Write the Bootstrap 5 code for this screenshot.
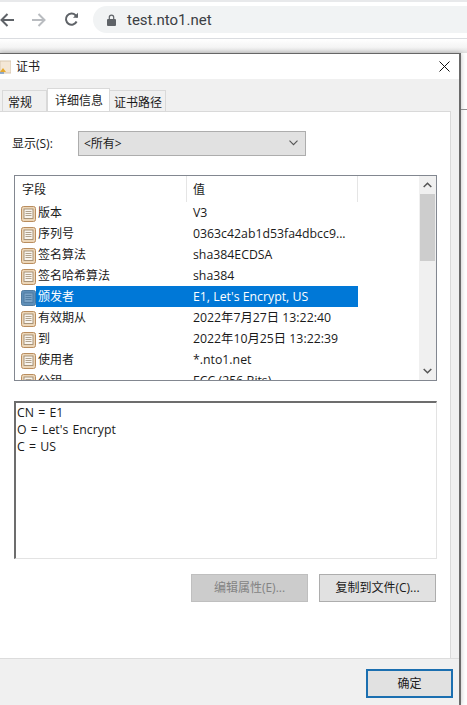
<!DOCTYPE html>
<html lang="zh">
<head>
<meta charset="utf-8">
<title>证书</title>
<link rel="stylesheet" href="https://cdn.jsdelivr.net/npm/bootstrap@5.3.0/dist/css/bootstrap.min.css">
<style>
html,body{height:705px;overflow:hidden;background:#fff}
body{font:12.3px/17px "Open Sans","Noto Sans CJK SC",sans-serif;color:#1a1a1a;width:467px}
.top-strip{height:2px;background:#e8e9eb}
.chrome{height:37px;padding-bottom:5px;border-bottom:1px solid #dadce0}
.chrome-btns{width:93px;height:27px;gap:18px}
.addr{height:27px;background:#f1f3f4;border-radius:14px 0 0 14px;padding-left:14px;gap:11px;font:15px Roboto,sans-serif;color:#3c4043}
.under{height:14px;background:linear-gradient(#fff,#f4f4f4 60%,#dedede)}
.stage{height:652px;background:#fff}
.side-line{width:6px;height:57px;border-bottom:1px solid #8f8f8f}
.dlg{width:461px;height:652px;background:#f0f0f0;border-top:1px solid #666;border-right:2px solid #6a6a6a;box-shadow:0 0 5px rgba(0,0,0,.25)}
.dlg-title{height:25px;background:#fff;font-size:12px}
.dlg-title .ttl{margin-left:5px}
.x-btn{margin-right:9px}
.tabrow{height:33px;padding-left:2px;width:450px}
.ctab{height:22px;width:45px;border:1px solid #d9d9d9;border-bottom:0;background:#f0f0f0;font-size:12px;line-height:23px;padding-left:5px}
.ctab.on{height:24px;width:63px;background:#fff;line-height:23px;padding-left:7px}
.ctab.w3{width:56px;border-left:0;padding-left:4px}
.pane{width:451px;height:547px;background:#fff;border-top:1px solid #d9d9d9;border-right:1px solid #d9d9d9;padding:18px 0 0 14px;margin-top:-1px}
.show-row{height:26px;margin-left:-2px}
.show-lbl{width:66px;font-size:12px}
.sel{width:228px;height:25px;background:#e1e1e1;border:1px solid #adadad;padding:0 7px 0 5px;font-size:12px}
.fields{width:423px;height:206px;margin-top:19px;border:1px solid #828790;overflow:hidden}
.flist{width:405px;height:204px;overflow:hidden}
.fhead{height:26px;font-size:12px}
.hcell1{width:172px;padding-left:7px;border-right:1px solid #e5e5e5;height:26px;line-height:28px}
.hcell2{width:171px;padding-left:6px;border-right:1px solid #e5e5e5;height:26px;line-height:28px}
.frow{height:21px;line-height:21px;white-space:nowrap}
.cico{width:15px;margin-left:6px;flex:none}
.c1{width:151px;flex:none;padding-left:2px;font-size:12px}
.c2{width:171px;flex:none;padding-left:6px}
.cv{display:flex;width:322px}
.sel-row .cv{background:#0078d7;color:#fff}
.sbar{width:17px;height:204px;background:#f0f0f0}
.sarrow{height:18px}
.strack{height:168px}
.sthumb{height:67px;width:15px;margin:0 auto;background:#cdcdcd}
.detail{width:423px;height:158px;margin-top:20px;border-style:solid;border-width:2px 1px 1px 2px;border-color:#6d6d6d #e3e3e3 #e3e3e3 #6d6d6d;padding:1px 1px;font-size:12.3px;line-height:17px;word-spacing:1px}
.acts{width:422px;margin-top:15px;gap:11px}
.wbtn{width:117px;height:28px;border-radius:0;background:#e1e1e1;border:1px solid #adadad;padding:0;font-size:12px;color:#1a1a1a;line-height:26px}
.wbtn:disabled{background:#ccc;border-color:#bfbfbf;color:#838383;opacity:1}
.foot{height:47px;border-top:1px solid #dcdcdc}
.okb{width:87px;height:29px;border:2px solid #1b6fb0;margin:10px 6px 0 0}
</style>
</head>
<body>
<div class="top-strip"></div>
<div class="chrome d-flex align-items-end">
  <div class="chrome-btns d-flex align-items-center flex-shrink-0">
    <svg width="14" height="14" viewBox="0 0 14 14" fill="none" stroke="#5f6368" stroke-width="2"><path d="M14 7H1.500M7.500 1L1.500 7l6 6"/></svg>
    <svg width="14" height="14" viewBox="0 0 14 14" fill="none" stroke="#b9bcc0" stroke-width="2"><path d="M0 7h12.500M6.500 1l6 6-6 6"/></svg>
    <svg width="15" height="15" viewBox="0 0 15 15" fill="none" stroke="#5f6368" stroke-width="2"><path d="M12.600 9.500A5.600 5.600 0 1 1 11.600 3.200L13.400 5"/><path d="M14 .8v5h-5z" fill="#5f6368" stroke="none"/></svg>
  </div>
  <div class="addr flex-grow-1 d-flex align-items-center">
    <svg width="9" height="12" viewBox="0 0 9 12"><path d="M1 5h7a1 1 0 0 1 1 1v5a1 1 0 0 1-1 1H1a1 1 0 0 1-1-1V6a1 1 0 0 1 1-1z" fill="#5f6368"/><path d="M2.300 5V3.300a2.200 2.200 0 0 1 4.400 0V5" fill="none" stroke="#5f6368" stroke-width="1.200"/></svg>
    <span>test.nto1.net</span>
  </div>
</div>
<div class="under"></div>
<div class="stage d-flex">
  <div class="dlg flex-shrink-0 d-flex flex-column">
    <div class="dlg-title d-flex align-items-center flex-shrink-0">
      <svg width="11" height="14" viewBox="0 0 11 14"><rect x="0" y="1" width="11" height="12" fill="#f4e7d6" stroke="#d8c7b0"/><path d="M0 12l3-4 3 4z" fill="#e6a92f"/><path d="M0 12.500h4v1H0z" fill="#3a78c4"/></svg>
      <span class="ttl">证书</span>
      <svg class="ms-auto x-btn" width="11" height="11" viewBox="0 0 11 11" stroke="#111" fill="none"><path d="M.5.5l10 10M10.500.5l-10 10"/></svg>
    </div>
    <div class="tabrow d-flex align-items-end flex-shrink-0">
      <div class="ctab">常规</div>
      <div class="ctab on">详细信息</div>
      <div class="ctab w3">证书路径</div>
    </div>
    <div class="pane flex-shrink-0">
      <div class="show-row d-flex align-items-center">
        <div class="show-lbl">显示(S):</div>
        <div class="sel d-flex align-items-center justify-content-between"><span>&lt;所有&gt;</span><svg width="9" height="6" viewBox="0 0 9 6" fill="none" stroke="#555" stroke-width="1.100"><path d="M.5.7l4 4 4-4"/></svg></div>
      </div>
      <div class="fields d-flex">
        <div class="flist">
          <div class="fhead d-flex"><span class="hcell1">字段</span><span class="hcell2">值</span></div>
          <div class="frow d-flex"><div class="cico"><svg width="15" height="16" viewBox="0 0 15 16"><rect x=".5" y=".5" width="14" height="15" rx="2" fill="#ecd6b8" stroke="#b98d5e"/><rect x="3" y="3" width="9" height="9.500" fill="#f8f4ee" stroke="#a08a6e" stroke-width=".9"/><path d="M4.500 5.500h6M4.500 7.500h6M4.500 9.500h6" stroke="#a89880" stroke-width=".9"/></svg></div><div class="cv"><div class="c1">版本</div><div class="c2">V3</div></div></div>
          <div class="frow d-flex"><div class="cico"><svg width="15" height="16" viewBox="0 0 15 16"><rect x=".5" y=".5" width="14" height="15" rx="2" fill="#ecd6b8" stroke="#b98d5e"/><rect x="3" y="3" width="9" height="9.500" fill="#f8f4ee" stroke="#a08a6e" stroke-width=".9"/><path d="M4.500 5.500h6M4.500 7.500h6M4.500 9.500h6" stroke="#a89880" stroke-width=".9"/></svg></div><div class="cv"><div class="c1">序列号</div><div class="c2">0363c42ab1d53fa4dbcc9...</div></div></div>
          <div class="frow d-flex"><div class="cico"><svg width="15" height="16" viewBox="0 0 15 16"><rect x=".5" y=".5" width="14" height="15" rx="2" fill="#ecd6b8" stroke="#b98d5e"/><rect x="3" y="3" width="9" height="9.500" fill="#f8f4ee" stroke="#a08a6e" stroke-width=".9"/><path d="M4.500 5.500h6M4.500 7.500h6M4.500 9.500h6" stroke="#a89880" stroke-width=".9"/></svg></div><div class="cv"><div class="c1">签名算法</div><div class="c2">sha384ECDSA</div></div></div>
          <div class="frow d-flex"><div class="cico"><svg width="15" height="16" viewBox="0 0 15 16"><rect x=".5" y=".5" width="14" height="15" rx="2" fill="#ecd6b8" stroke="#b98d5e"/><rect x="3" y="3" width="9" height="9.500" fill="#f8f4ee" stroke="#a08a6e" stroke-width=".9"/><path d="M4.500 5.500h6M4.500 7.500h6M4.500 9.500h6" stroke="#a89880" stroke-width=".9"/></svg></div><div class="cv"><div class="c1">签名哈希算法</div><div class="c2">sha384</div></div></div>
          <div class="frow sel-row d-flex"><div class="cico"><svg width="15" height="16" viewBox="0 0 15 16"><rect x=".5" y=".5" width="14" height="15" rx="2" fill="#5f8fb8" stroke="#4f7a9f"/><rect x="3" y="3" width="9" height="9.500" fill="#7ba3c6" stroke="#4f7a9f" stroke-width=".9"/><path d="M4.500 5.500h6M4.500 7.500h6M4.500 9.500h6" stroke="#4f7a9f" stroke-width=".9"/></svg></div><div class="cv"><div class="c1">颁发者</div><div class="c2">E1, Let's Encrypt, US</div></div></div>
          <div class="frow d-flex"><div class="cico"><svg width="15" height="16" viewBox="0 0 15 16"><rect x=".5" y=".5" width="14" height="15" rx="2" fill="#ecd6b8" stroke="#b98d5e"/><rect x="3" y="3" width="9" height="9.500" fill="#f8f4ee" stroke="#a08a6e" stroke-width=".9"/><path d="M4.500 5.500h6M4.500 7.500h6M4.500 9.500h6" stroke="#a89880" stroke-width=".9"/></svg></div><div class="cv"><div class="c1">有效期从</div><div class="c2">2022年7月27日 13:22:40</div></div></div>
          <div class="frow d-flex"><div class="cico"><svg width="15" height="16" viewBox="0 0 15 16"><rect x=".5" y=".5" width="14" height="15" rx="2" fill="#ecd6b8" stroke="#b98d5e"/><rect x="3" y="3" width="9" height="9.500" fill="#f8f4ee" stroke="#a08a6e" stroke-width=".9"/><path d="M4.500 5.500h6M4.500 7.500h6M4.500 9.500h6" stroke="#a89880" stroke-width=".9"/></svg></div><div class="cv"><div class="c1">到</div><div class="c2">2022年10月25日 13:22:39</div></div></div>
          <div class="frow d-flex"><div class="cico"><svg width="15" height="16" viewBox="0 0 15 16"><rect x=".5" y=".5" width="14" height="15" rx="2" fill="#ecd6b8" stroke="#b98d5e"/><rect x="3" y="3" width="9" height="9.500" fill="#f8f4ee" stroke="#a08a6e" stroke-width=".9"/><path d="M4.500 5.500h6M4.500 7.500h6M4.500 9.500h6" stroke="#a89880" stroke-width=".9"/></svg></div><div class="cv"><div class="c1">使用者</div><div class="c2">*.nto1.net</div></div></div>
          <div class="frow d-flex"><div class="cico"><svg width="15" height="16" viewBox="0 0 15 16"><rect x=".5" y=".5" width="14" height="15" rx="2" fill="#ecd6b8" stroke="#b98d5e"/><rect x="3" y="3" width="9" height="9.500" fill="#f8f4ee" stroke="#a08a6e" stroke-width=".9"/><path d="M4.500 5.500h6M4.500 7.500h6M4.500 9.500h6" stroke="#a89880" stroke-width=".9"/></svg></div><div class="cv"><div class="c1">公钥</div><div class="c2">ECC (256 Bits)</div></div></div>
        </div>
        <div class="sbar d-flex flex-column">
          <div class="sarrow d-flex align-items-center justify-content-center"><svg width="9" height="6" viewBox="0 0 9 6" fill="none" stroke="#555" stroke-width="1.500"><path d="M.7 5l3.800-3.800L8.300 5"/></svg></div>
          <div class="strack"><div class="sthumb"></div></div>
          <div class="sarrow d-flex align-items-center justify-content-center"><svg width="9" height="6" viewBox="0 0 9 6" fill="none" stroke="#555" stroke-width="1.500"><path d="M.7 1l3.800 3.800L8.300 1"/></svg></div>
        </div>
      </div>
      <div class="detail">CN = E1<br>O = Let's Encrypt<br>C = US</div>
      <div class="acts d-flex justify-content-end">
        <button class="btn wbtn" disabled>编辑属性(E)...</button>
        <button class="btn wbtn">复制到文件(C)...</button>
      </div>
    </div>
    <div class="foot d-flex justify-content-end flex-shrink-0">
      <button class="btn wbtn okb">确定</button>
    </div>
  </div>
  <div class="side-line flex-shrink-0"></div>
</div>
<script src="https://cdn.jsdelivr.net/npm/bootstrap@5.3.0/dist/js/bootstrap.bundle.min.js"></script>
</body>
</html>
